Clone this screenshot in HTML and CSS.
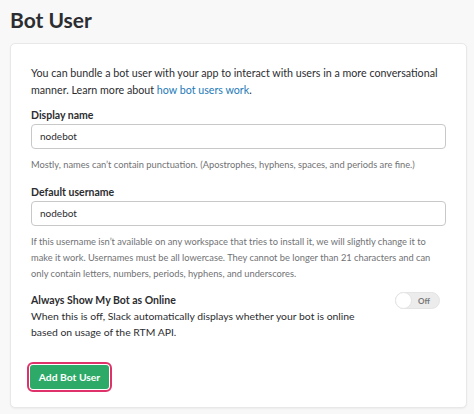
FILE: index.html
```html
<!DOCTYPE html>
<html>
<head>
<meta charset="utf-8">
<link rel="stylesheet" href="styles.css">
</head>
<body>
<div class="page">
  <h1 class="title">Bot User</h1>
  <div class="card">
    <p class="intro">You can bundle a bot user with your app to interact with users in a more conversational manner. Learn more about <a class="link" href="#">how bot users work</a>.</p>

    <label class="label">Display name</label>
    <div class="input">nodebot</div>
    <p class="hint">Mostly, names can’t contain punctuation. (Apostrophes, hyphens, spaces, and periods are fine.)</p>

    <label class="label label-second">Default username</label>
    <div class="input">nodebot</div>
    <p class="hint">If this username isn’t available on any workspace that tries to install it, we will slightly change it to make it work. Usernames must be all lowercase. They cannot be longer than 21 characters and can only contain letters, numbers, periods, hyphens, and underscores.</p>

    <div class="online-row">
      <div class="online-text">
        <div class="online-title">Always Show My Bot as Online</div>
        <div class="online-desc">When this is off, Slack automatically displays whether your bot is online based on usage of the RTM API.</div>
      </div>
      <div class="toggle">
        <span class="knob"></span>
        <span class="toggle-label">Off</span>
      </div>
    </div>

    <div class="actions">
      <button class="btn">Add Bot User</button>
    </div>
  </div>
</div>
</body>
</html>
```

FILE: styles.css
```css
* { box-sizing: border-box; }
html, body { margin: 0; padding: 0; }
body {
  background: #f8f8f8;
  font-family: Lato, "Open Sans", sans-serif;
  color: #2c2d30;
  width: 474px;
  height: 414px;
  overflow: hidden;
}
.page {
  padding: 0 7px 0 10px;
}
.title {
  margin: 0;
  padding-top: 6px;
  height: 43px;
  font-size: 21px;
  line-height: 28px;
  font-weight: 700;
  color: #2c2d30;
}
.card {
  background: #fff;
  border: 1px solid #e8e8e8;
  border-radius: 5px;
  box-shadow: 0 1px 2px rgba(0,0,0,0.05);
  padding: 20px 20px 18px 20px;
  height: 365px;
}
.intro {
  margin: 0 0 9px;
  font-size: 10.7px;
  line-height: 17px;
  color: #2c2d30;
}
.link { color: #1d7ab8; text-decoration: none; }
.label {
  display: block;
  font-size: 10.5px;
  font-weight: 700;
  line-height: 16px;
  margin-bottom: 1px;
}
.label-second { margin-top: 11px; }
.input {
  height: 25px;
  border: 1px solid #c8c8c8;
  border-radius: 4px;
  padding: 0 8px;
  font-size: 10px;
  line-height: 23px;
  color: #2c2d30;
}
.hint {
  margin: 8px 0 0;
  font-size: 9.3px;
  line-height: 16px;
  color: #717274;
}
.online-row {
  display: flex;
  justify-content: space-between;
  align-items: flex-start;
  margin-top: 10px;
}
.online-text { width: 340px; }
.online-title {
  font-size: 10.5px;
  font-weight: 700;
  line-height: 16px;
}
.online-desc {
  font-size: 10.4px;
  line-height: 16px;
  color: #2c2d30;
}
.toggle {
  position: relative;
  margin-top: 0;
  margin-right: 6px;
  width: 45px;
  height: 17px;
  border-radius: 9px;
  background: #ececec;
  border: 1px solid #e4e4e4;
  display: flex;
  align-items: center;
  justify-content: flex-end;
  padding-right: 9px;
}
.knob {
  position: absolute;
  left: -1px;
  top: -1px;
  width: 17px;
  height: 17px;
  border-radius: 50%;
  background: #fff;
  border: 1px solid #e4e4e4;
}
.toggle-label {
  font-size: 8px;
  font-weight: 700;
  color: #777;
}
.actions {
  margin-top: 25px;
}
.btn {
  display: block;
  height: 24px;
  width: 79px;
  margin-left: -1px;
  padding: 0;
  border: none;
  border-radius: 3px;
  background: #2eaa68;
  color: #fff;
  font-family: Lato, sans-serif;
  font-size: 10.3px;
  font-weight: 700;
  outline: 2px solid #e0326a;
  outline-offset: 1px;
}
```
